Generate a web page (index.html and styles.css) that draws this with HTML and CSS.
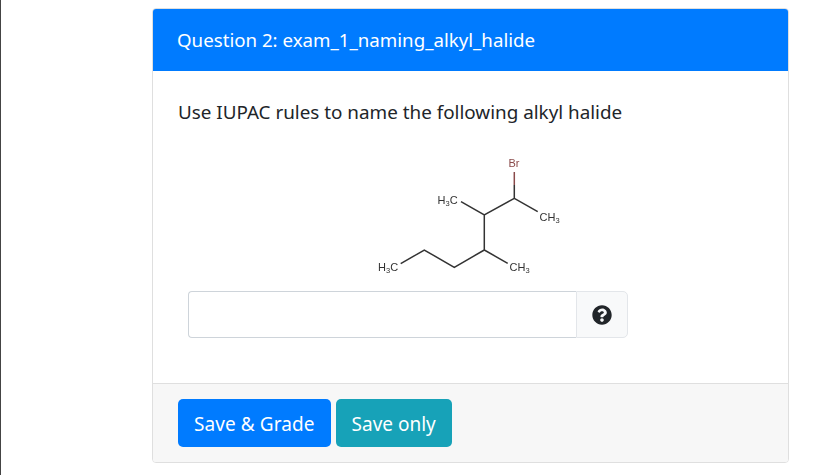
FILE: index.html
```html
<!DOCTYPE html>
<html lang="en">

<head>
    <meta charset="UTF-8">
    <meta name="viewport" content="width=device-width, initial-scale=1.0">
    <title>Question 2</title>
    <link rel="stylesheet" href="styles.css">
</head>

<body>
    <div class="page">
        <div class="card">
            <div class="card-header">Question 2: exam_1_naming_alkyl_halide</div>

            <div class="card-body">
                <p class="prompt">Use IUPAC rules to name the following alkyl halide</p>

                <!-- Molecule -->
                <svg class="molecule" width="210" height="135" viewBox="360 150 210 135">
                    <path class="bond-br" d="M514.3 172V185"/>
                    <path class="bond" d="M514.3 185V198.3L537.7 211.7M514.3 198.3L484.3 215L461 201.7M484.3 215V250L507.7 263.3M484.3 250L454.3 267.3L424.3 250L400.7 263.7"/>
                    <text class="atom atom-br" x="508.5" y="167">Br</text>
                    <text class="atom" x="437.5" y="204">H<tspan class="sub" dy="1.5">3</tspan><tspan dy="-1.5">C</tspan></text>
                    <text class="atom" x="539.5" y="221">CH<tspan class="sub" dy="1.5">3</tspan></text>
                    <text class="atom" x="509.5" y="271">CH<tspan class="sub" dy="1.5">3</tspan></text>
                    <text class="atom" x="378" y="271">H<tspan class="sub" dy="1.5">3</tspan><tspan dy="-1.5">C</tspan></text>
                </svg>

                <div class="input-group">
                    <input class="answer" type="text">
                    <span class="addon">
                        <svg class="help-icon" viewBox="0 0 512 512">
                            <path d="M504 256c0 136.997-111.043 248-248 248S8 392.997 8 256C8 119.083 119.043 8 256 8s248 111.083 248 248zM262.655 90c-54.497 0-89.255 22.957-116.549 63.758-3.536 5.286-2.353 12.415 2.715 16.258l34.699 26.31c5.205 3.947 12.621 3.008 16.665-2.122 17.864-22.658 30.113-35.797 57.303-35.797 20.429 0 45.698 13.148 45.698 32.958 0 14.976-12.363 22.667-32.534 33.976C247.128 238.528 216 254.941 216 296v4c0 6.627 5.373 12 12 12h56c6.627 0 12-5.373 12-12v-1.333c0-28.462 83.186-29.647 83.186-106.667 0-58.002-60.165-102-116.531-102zM256 338c-25.365 0-46 20.635-46 46 0 25.364 20.635 46 46 46s46-20.636 46-46c0-25.365-20.635-46-46-46z"/>
                        </svg>
                    </span>
                </div>
            </div>

            <div class="card-footer">
                <button class="btn btn-primary">Save &amp; Grade</button>
                <button class="btn btn-info">Save only</button>
            </div>
        </div>
    </div>
</body>

</html>
```

FILE: styles.css
```css
/* Page */
html,
body {
    height: 100%;
}

body {
    margin: 0;
    background-color: #fff;
    color: #212529;
    font-family: "Noto Sans", "Open Sans", sans-serif;
    overflow: hidden;
}

.page {
    height: 100%;
    box-sizing: border-box;
    padding: 8px 45px 0 151px;
    border-left: 1px solid #444;
}

/* Card */
.card {
    display: flex;
    flex-direction: column;
    height: 453px;
    border: 1px solid #dfdfdf;
    border-radius: 4px;
    overflow: hidden;
}

.card-header {
    height: 62px;
    flex-shrink: 0;
    box-sizing: border-box;
    padding-left: 24px;
    background-color: #007bff;
    color: #fff;
    font-size: 18.7px;
    line-height: 62px;
}

.card-body {
    flex: 1;
    padding: 28px 24px 0;
}

.prompt {
    margin: 0;
    padding-left: 1px;
    font-size: 18.85px;
    line-height: 26px;
}

/* Molecule */
.molecule {
    display: block;
    margin: 25px 0 0 183px;
    filter: blur(0.35px);
}

.bond,
.bond-br {
    fill: none;
    stroke: #333;
    stroke-width: 1.5;
}

.bond-br {
    stroke: #8a4a4a;
}

.atom {
    font-family: "Liberation Sans", Arial, sans-serif;
    font-size: 11px;
    fill: #333;
}

.atom-br {
    fill: #8a4a4a;
}

.sub {
    font-size: 7.5px;
}

/* Answer field */
.input-group {
    display: flex;
    width: 440px;
    height: 47px;
    margin: 6px 0 0 11px;
}

.answer {
    flex: 1;
    min-width: 0;
    box-sizing: border-box;
    border: 1px solid #ced4da;
    border-right: none;
    border-radius: 4px 0 0 4px;
    outline: none;
}

.addon {
    display: flex;
    align-items: center;
    justify-content: center;
    width: 52px;
    box-sizing: border-box;
    background-color: #f8f9fa;
    border: 1px solid #e3e6ea;
    border-radius: 0 5px 5px 0;
}

.help-icon {
    width: 20px;
    height: 20px;
    fill: #212529;
}

/* Footer */
.card-footer {
    display: flex;
    gap: 5px;
    height: 79px;
    flex-shrink: 0;
    box-sizing: border-box;
    padding: 15px 25px 0;
    background-color: #f7f7f7;
    border-top: 1px solid #dfdfdf;
}

.btn {
    height: 48px;
    padding: 1px 16px 0;
    border: none;
    border-radius: 5px;
    color: #fff;
    font-family: inherit;
    font-size: 19px;
}

.btn-primary {
    background-color: #007bff;
    letter-spacing: 0.08px;
}

.btn-info {
    background-color: #17a2b8;
}
```
